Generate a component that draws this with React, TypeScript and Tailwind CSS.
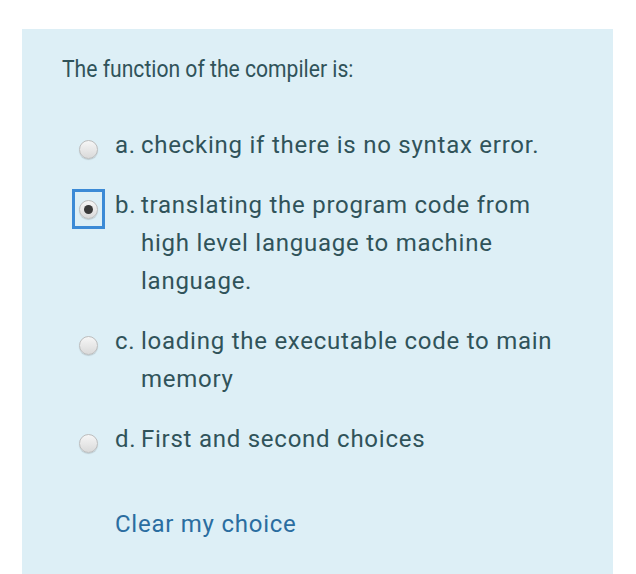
export default function App() {
  const options = [
    { key: "a.", text: "checking if there is no syntax error." },
    { key: "b.", text: "translating the program code from high level language to machine language.", checked: true },
    { key: "c.", text: "loading the executable code to main memory" },
    { key: "d.", text: "First and second choices" },
  ];

  return (
    <div className="w-[636px] h-[574px] bg-white pt-[29px] pl-[22px] font-['Roboto',sans-serif]">
      <div className="w-[591px] h-[545px] bg-[#ddeff6] pl-[40px] pr-[40px] pt-[22px]">
        <p className="text-[24px] leading-[36px] text-[#30535a]">
          <span className="inline-block origin-left scale-x-[0.88] whitespace-nowrap">The function of the compiler is:</span>
        </p>

        <div className="mt-[39px] flex flex-col gap-[22px]">
          {options.map((o) => (
            <div key={o.key} className="flex items-start text-[24px] leading-[38px] tracking-[0.75px] text-[#30535a]">
              <div className="w-[53px] h-[38px] flex items-center justify-center shrink-0">
                <div className="translate-y-[4px]">
                  {o.checked ? (
                    <div className="w-[33px] h-[40px] border-[3px] border-[#3b8ad6] flex items-center justify-center">
                      <Radio checked />
                    </div>
                  ) : (
                    <Radio />
                  )}
                </div>
              </div>
              <span className="w-[26px] shrink-0">{o.key}</span>
              <span>{o.text}</span>
            </div>
          ))}
        </div>

        <p className="mt-[48px] pl-[53px] text-[24px] leading-[36px] tracking-[0.75px] text-[#2a6da0]">Clear my choice</p>
      </div>
    </div>
  );
}

function Radio({ checked }: { checked?: boolean }) {
  return (
    <div className="w-[19px] h-[19px] rounded-full border border-[#bdbdbd] bg-gradient-to-b from-[#f6f6f6] to-[#dadada] shadow-[0_1px_1px_rgba(0,0,0,0.15)] flex items-center justify-center">
      {checked && <div className="w-[9px] h-[9px] rounded-full bg-[#3a3a3a]" />}
    </div>
  );
}
